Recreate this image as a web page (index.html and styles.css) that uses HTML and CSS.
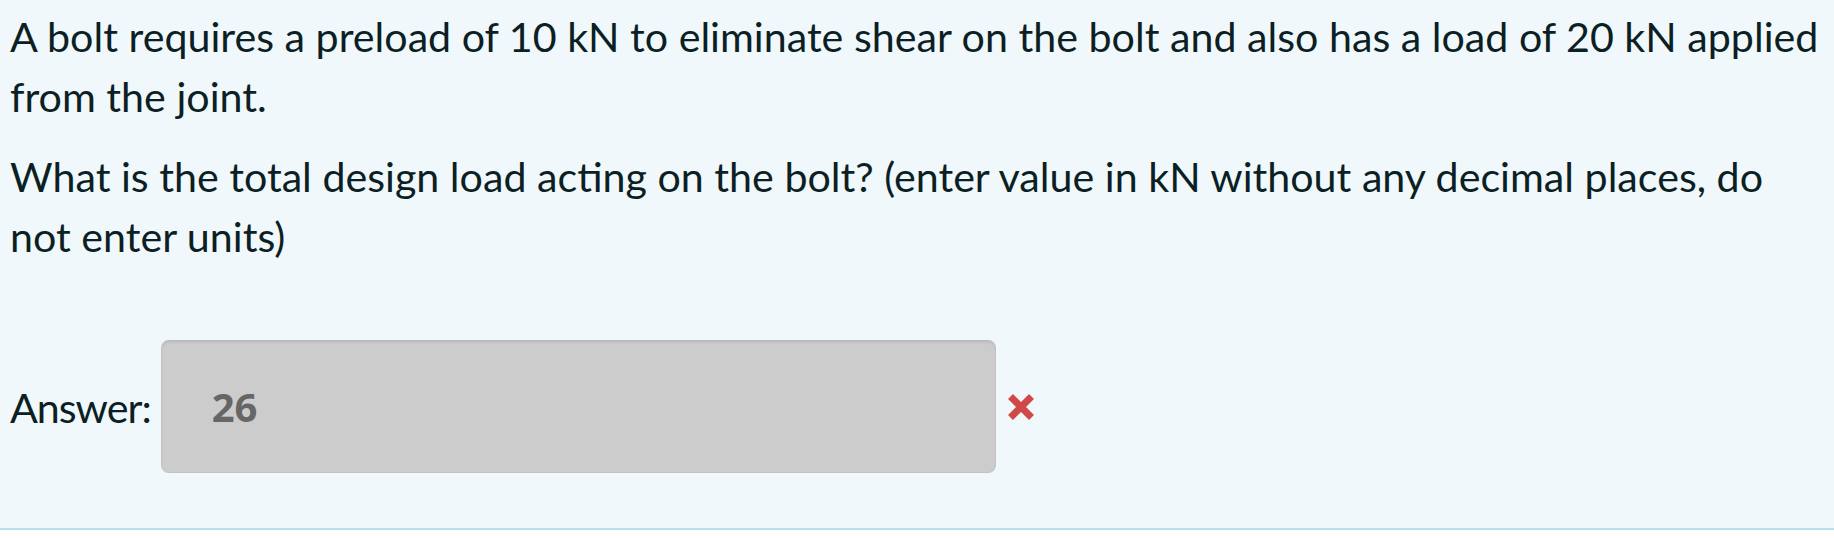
FILE: index.html
```html
<!DOCTYPE html>
<html lang="en">
<head>
<meta charset="utf-8">
<title>Question</title>
<link rel="stylesheet" href="styles.css">
</head>
<body>
<div class="formulation">
  <div class="qtext">
    <p>A bolt requires a preload of 10 kN to eliminate shear on the bolt and also has a load of 20 kN applied from the joint.</p>
    <p>What is the total design load acting on the bolt? (enter value in kN without any decimal places, do not enter units)</p>
  </div>
  <div class="ablock">
    <label class="alabel" for="ans">Answer:</label>
    <input id="ans" class="answer-input" type="text" value="26" readonly>
    <svg class="icon-wrong" width="28" height="28" viewBox="0 0 28 28" aria-label="Incorrect">
      <path d="M3.5 3.5 L24.5 24.5 M24.5 3.5 L3.5 24.5" stroke="#d04848" stroke-width="7" fill="none" stroke-linecap="butt"/>
    </svg>
  </div>
</div>
</body>
</html>
```
FILE: styles.css
```css
html, body {
  margin: 0;
  padding: 0;
  background: #ffffff;
}

.formulation {
  background: #f0f8fb;
  color: #0c1f24;
  font-family: Lato, "Open Sans", sans-serif;
  font-size: 41.2px;
  line-height: 60px;
  padding: 6px 12px 55px 10px;
  border-bottom: 2px solid #b5e1ee;
}

.qtext p {
  margin: 0 0 20px 0;
}

.qtext p:last-child {
  margin-bottom: 74px;
}

.ablock {
  display: flex;
  align-items: center;
  height: 133px;
}

.alabel {
  margin-right: 10px;
  letter-spacing: -1px;
  line-height: 60px;
}

.answer-input {
  box-sizing: border-box;
  width: 835px;
  height: 133px;
  margin: 0;
  padding: 0 50px;
  background: #cccccc;
  border: 1px solid #c2c2c2;
  border-top-color: #b9b9b9;
  border-radius: 8px;
  box-shadow: inset 0 2px 2px rgba(0, 0, 0, 0.06);
  font-family: "Open Sans", sans-serif;
  font-weight: 700;
  font-size: 40px;
  color: #666666;
  outline: none;
}

.icon-wrong {
  margin-left: 11px;
  flex: none;
}
```
